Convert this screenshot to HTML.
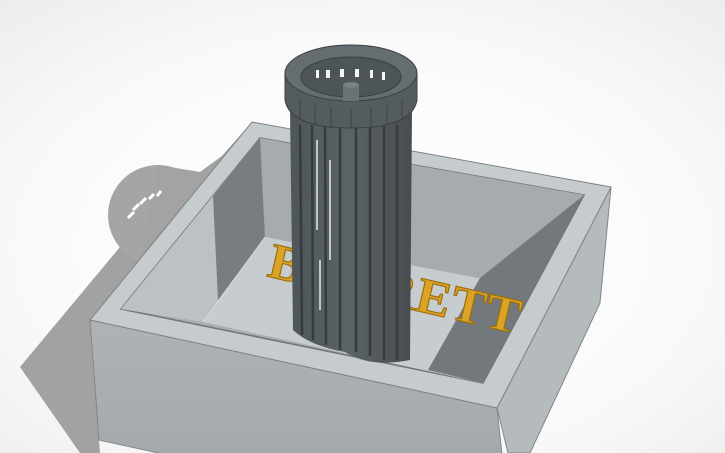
<!DOCTYPE html>
<html><head><style>html,body{margin:0;padding:0;width:725px;height:453px;overflow:hidden;background:#fff}svg{display:block}</style></head>
<body>
<svg width="725" height="453" viewBox="0 0 725 453" xmlns="http://www.w3.org/2000/svg">
<defs>
<radialGradient id="bg" cx="0.5" cy="0.55" r="0.75"><stop offset="0" stop-color="#ffffff"/><stop offset="0.6" stop-color="#fafafa"/><stop offset="1" stop-color="#ececec"/></radialGradient>
<linearGradient id="front" x1="0" y1="0" x2="0" y2="1"><stop offset="0" stop-color="#aeb3b6"/><stop offset="1" stop-color="#9ea3a6"/></linearGradient>
<linearGradient id="tw" x1="0" y1="0" x2="1" y2="0"><stop offset="0" stop-color="#4f565a"/><stop offset="0.5" stop-color="#5c6367"/><stop offset="1" stop-color="#464c50"/></linearGradient>
</defs>
<rect width="725" height="453" fill="url(#bg)"/>
<polygon points="20,367 130,235 185,172 205,175 252,122 99,440 100,453 80,453" fill="#a2a2a2"/>
<circle cx="158" cy="215" r="50" fill="#a5a5a5"/>
<polygon points="158,165 200,172 230,150 200,250 140,260" fill="#a3a3a3"/>
<g stroke="#fff" stroke-width="3"><line x1="128" y1="218" x2="134" y2="212"/><line x1="133" y1="210" x2="139" y2="204"/><line x1="140" y1="204" x2="146" y2="198"/><line x1="149" y1="199" x2="154" y2="194"/><line x1="157" y1="196" x2="161" y2="191"/></g>
<polygon points="90,320 497,408 510,530 99,440" fill="url(#front)" stroke="#80868a" stroke-width="1"/>
<polygon points="497,408 611,187 600,303 530,453 508,453" fill="#b5babd" stroke="#80868a" stroke-width="1"/>
<polygon points="252,122 611,187 497,408 90,320" fill="#c6cbce" stroke="#7d8387" stroke-width="1"/>
<polygon points="260,138 584,195 483,383 121,309" fill="#a9aeb1" stroke="#6e7478" stroke-width="1.5"/>
<polygon points="260,138 584,195 530,288 265,237" fill="#a6abae"/>
<polygon points="265,237 530,288 483,383 203,322" fill="#c7ccce"/>
<polygon points="121,309 260,138 265,237 203,322" fill="#bcc1c4"/>
<polygon points="213,196 260,138 265,237 218,300" fill="#777d81"/>
<polygon points="584,195 480,278 428,370 483,383" fill="#72787c"/>
<line x1="265" y1="237" x2="203" y2="322" stroke="#d8dcde" stroke-width="0.8"/>
<text x="0" y="0" transform="translate(266,276) rotate(13)" font-family="Liberation Serif, serif" font-weight="bold" font-size="50" fill="#dca426" stroke="#9c6f0c" stroke-width="1.2" letter-spacing="1" textLength="258" lengthAdjust="spacingAndGlyphs">BARRETT</text>
<path d="M290,110 L412,110 L410,360 Q370,368 345,352 Q310,346 293,330 Z" fill="url(#tw)"/>
<g stroke="#353b3f" stroke-width="2.5">
<line x1="300" y1="125" x2="302" y2="335"/><line x1="312" y1="125" x2="313" y2="340"/><line x1="325" y1="125" x2="326" y2="345"/><line x1="340" y1="125" x2="340" y2="350"/><line x1="356" y1="125" x2="356" y2="352"/><line x1="370" y1="125" x2="370" y2="356"/><line x1="384" y1="125" x2="384" y2="360"/><line x1="397" y1="125" x2="397" y2="360"/>
</g>
<g stroke="#e8eaeb" stroke-width="1.5"><line x1="317" y1="140" x2="317" y2="230"/><line x1="330" y1="160" x2="330" y2="260"/><line x1="320" y1="260" x2="320" y2="310"/></g>
<path d="M285,73 L285,100 Q290,128 351,128 Q412,128 417,100 L417,73 Z" fill="#555c60" stroke="#3a4044"/>
<ellipse cx="351" cy="73" rx="66" ry="28" fill="#666d71" stroke="#3a4044"/>
<ellipse cx="351" cy="77" rx="50" ry="20" fill="#4e5559" stroke="#3a4044"/>
<g fill="#f5f5f5"><rect x="316" y="70" width="3" height="8"/><rect x="326" y="70" width="4" height="8"/><rect x="340" y="69" width="4" height="8"/><rect x="355" y="69" width="4" height="8"/><rect x="370" y="70" width="3" height="8"/><rect x="382" y="72" width="3" height="8"/></g>
<rect x="343" y="85" width="16" height="16" fill="#6b7276"/><ellipse cx="351" cy="85" rx="8" ry="3" fill="#7a8185"/>
<g stroke="#3a4044" stroke-width="1"><line x1="300" y1="100" x2="300" y2="120"/><line x1="315" y1="105" x2="315" y2="125"/><line x1="331" y1="108" x2="331" y2="128"/><line x1="351" y1="109" x2="351" y2="128"/><line x1="371" y1="108" x2="371" y2="128"/><line x1="387" y1="105" x2="387" y2="125"/><line x1="402" y1="100" x2="402" y2="120"/></g>
</svg>
</body></html>
